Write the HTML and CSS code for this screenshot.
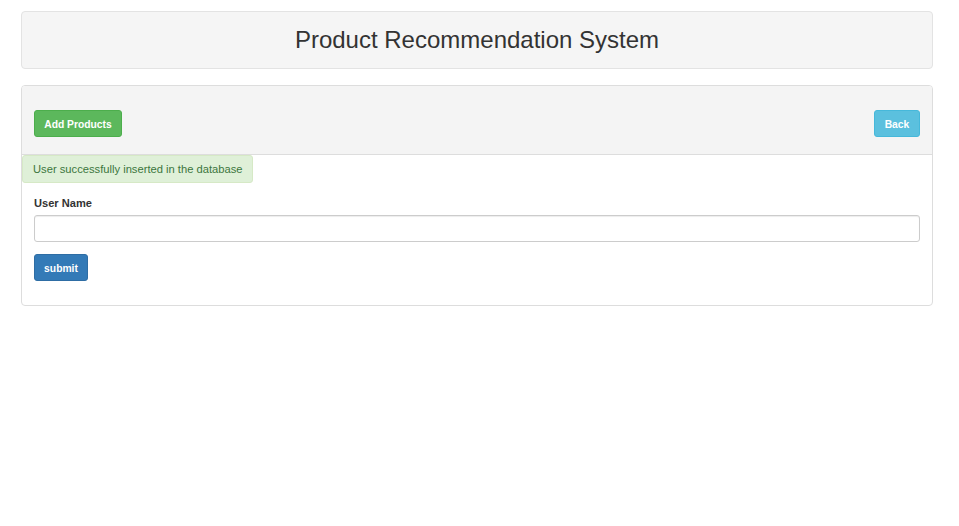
FILE: index.html
```html
<!DOCTYPE html>
<html>
<head>
<meta charset="utf-8">
<title>Product Recommendation System</title>
<link rel="stylesheet" href="styles.css">
</head>
<body>
<div class="page">
  <div class="title-card">
    <h1 class="title">Product Recommendation System</h1>
  </div>
  <div class="panel">
    <div class="panel-heading">
      <button class="btn btn-success">Add Products</button>
      <button class="btn btn-info">Back</button>
    </div>
    <div class="panel-body">
      <div class="alert">User successfully inserted in the database</div>
      <form class="form">
        <label class="label" for="uname">User Name</label>
        <input class="input" id="uname" type="text">
        <button type="button" class="btn btn-primary">submit</button>
      </form>
    </div>
  </div>
</div>
</body>
</html>
```

FILE: styles.css
```css
html, body {
  margin: 0;
  padding: 0;
  background: #fff;
}
body {
  font-family: "Liberation Sans", Arial, sans-serif;
  color: #333;
}
.page {
  width: 912px;
  padding: 11px 0 0 21px;
}
.title-card {
  height: 56px;
  border: 1px solid #e3e3e3;
  border-radius: 4px;
  background: #f5f5f5;
  display: flex;
  align-items: center;
  justify-content: center;
  margin-bottom: 16px;
}
.title {
  margin: 0;
  font-size: 24px;
  font-weight: normal;
  line-height: 28px;
  color: #333;
}
.panel {
  border: 1px solid #ddd;
  border-radius: 4px;
  background: #fff;
}
.panel-heading {
  background: #f4f4f4;
  border-bottom: 1px solid #ddd;
  border-radius: 3px 3px 0 0;
  padding: 24px 12px 17px 12px;
  display: flex;
  justify-content: space-between;
  align-items: center;
}
.btn {
  font-family: "Liberation Sans", Arial, sans-serif;
  font-size: 10.3px;
  font-weight: bold;
  color: #fff;
  height: 27px;
  padding: 1px 9px 0 9px;
  border: 1px solid transparent;
  border-radius: 3px;
  line-height: 25px;
  cursor: pointer;
}
.btn-success {
  background: #5cb85c;
  border-color: #4cae4c;
  width: 88px;
}
.btn-info {
  background: #5bc0de;
  border-color: #46b8da;
  width: 46px;
}
.btn-primary {
  background: #337ab7;
  border-color: #2e6da4;
  width: 54px;
}
.panel-body {
  display: flex;
  flex-direction: column;
}
.alert {
  align-self: flex-start;
  width: 209px;
  height: 26px;
  line-height: 26px;
  padding: 0 10px 0 10px;
  background: #dff0d8;
  border: 1px solid #d6e9c6;
  border-radius: 3px;
  color: #3c763d;
  font-size: 11.2px;
  white-space: nowrap;
}
.form {
  display: flex;
  flex-direction: column;
  align-items: flex-start;
  padding: 13px 12px 24px 12px;
  margin: 0;
}
.label {
  font-size: 11.1px;
  font-weight: bold;
  line-height: 14px;
  color: #333;
  margin-bottom: 5px;
}
.input {
  box-sizing: border-box;
  width: 886px;
  height: 27px;
  border: 1px solid #ccc;
  border-radius: 3px;
  margin: 0 0 12px 0;
  padding: 0 10px;
  box-shadow: inset 0 1px 1px rgba(0,0,0,0.075);
}
```
